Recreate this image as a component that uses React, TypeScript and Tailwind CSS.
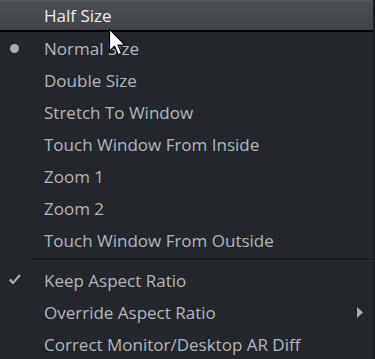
import { ReactNode } from 'react'

type Item = { label: string; mark?: 'dot' | 'check'; sub?: boolean; active?: boolean }

const top: Item[] = [
  { label: 'Half Size', active: true },
  { label: 'Normal Size', mark: 'dot' },
  { label: 'Double Size' },
  { label: 'Stretch To Window' },
  { label: 'Touch Window From Inside' },
  { label: 'Zoom 1' },
  { label: 'Zoom 2' },
  { label: 'Touch Window From Outside' },
]

const bottom: Item[] = [
  { label: 'Keep Aspect Ratio', mark: 'check' },
  { label: 'Override Aspect Ratio', sub: true },
  { label: 'Correct Monitor/Desktop AR Diff' },
]

function Mark({ mark }: { mark?: Item['mark'] }): ReactNode {
  if (mark === 'dot') return <span className="block w-[9px] h-[9px] rounded-full bg-[#a9adb1] ml-[10px]" />
  if (mark === 'check')
    return (
      <svg width="14" height="12" viewBox="0 0 14 12" className="ml-[8px]">
        <path d="M1 6.5 L5 10.5 L13 1.5 L11 0.5 L5 7.5 L3 4.5 Z" fill="#a9adb1" />
      </svg>
    )
  return null
}

function Row({ item }: { item: Item }) {
  return (
    <div
      className={
        item.active
          ? 'relative flex items-center h-[32px] bg-gradient-to-b from-[#4c5054] to-[#404448] border-t border-[#585b5e] border-b-2 border-b-black text-[#eeeeee]'
          : 'relative flex items-center h-[32px] text-[#b3b7bb]'
      }
    >
      <div className="w-[44px] flex items-center">
        <Mark mark={item.mark} />
      </div>
      <span className="text-[17px] leading-none">{item.label}</span>
      {item.sub && (
        <svg width="6" height="11" viewBox="0 0 6 11" className="absolute right-[10px]">
          <path d="M0 0 L6 5.5 L0 11 Z" fill="#a9adb1" />
        </svg>
      )}
    </div>
  )
}

export default function App() {
  return (
    <div
      className="relative w-[375px] h-[359px] overflow-hidden bg-[#23272b] border-r-2 border-[#1b1e21]"
      style={{ fontFamily: '"Open Sans", "Noto Sans", sans-serif' }}
    >
      {top.map((i) => (
        <Row key={i.label} item={i} />
      ))}
      <div className="h-[8px] pl-[31px] pt-[3px]">
        <div className="h-[1px] bg-[#0d0f10]" />
        <div className="h-[1px] bg-[#2f3337]" />
      </div>
      {bottom.map((i) => (
        <Row key={i.label} item={i} />
      ))}
      <svg width="19" height="29" viewBox="0 0 13 20" className="absolute left-[108px] top-[28px]">
        <path d="M1 1 L1 16 L4.5 12.5 L7 18.5 L9.3 17.5 L6.8 11.7 L11.5 11.7 Z" fill="#ffffff" stroke="#000000" strokeWidth="0.8" strokeLinejoin="round" />
      </svg>
    </div>
  )
}
